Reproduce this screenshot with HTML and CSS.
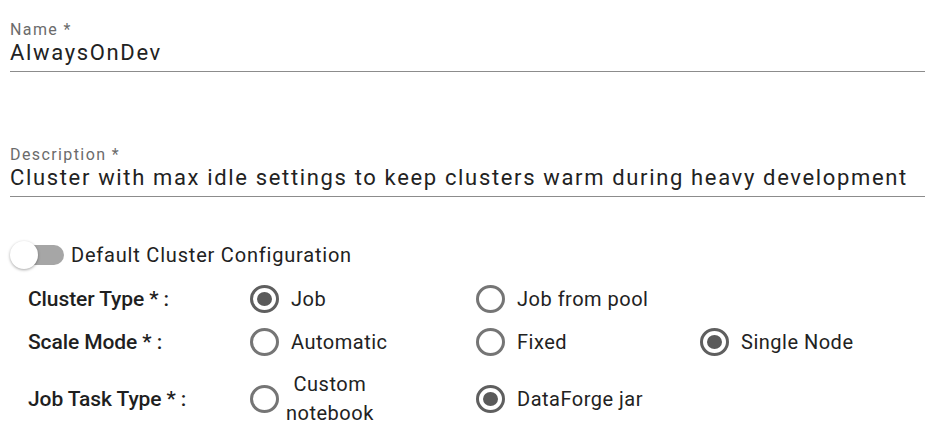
FILE: index.html
```html
<!DOCTYPE html>
<html>
<head>
<meta charset="utf-8">
<link rel="stylesheet" href="styles.css">
</head>
<body>
<div class="form">
  <div class="field field-name">
    <div class="field-label">Name *</div>
    <div class="field-value">AlwaysOnDev</div>
  </div>
  <div class="field field-desc">
    <div class="field-label">Description *</div>
    <div class="field-value">Cluster with max idle settings to keep clusters warm during heavy development</div>
  </div>
  <div class="switch-row">
    <span class="switch"><span class="switch-track"></span><span class="switch-thumb"></span></span>
    <span class="switch-label">Default Cluster Configuration</span>
  </div>
  <div class="options">
    <div class="opt-row">
      <div class="opt-label">Cluster Type * :</div>
      <div class="opt"><span class="radio checked"></span><span class="opt-text">Job</span></div>
      <div class="opt"><span class="radio"></span><span class="opt-text">Job from pool</span></div>
      <div></div>
    </div>
    <div class="opt-row">
      <div class="opt-label">Scale Mode * :</div>
      <div class="opt"><span class="radio"></span><span class="opt-text">Automatic</span></div>
      <div class="opt"><span class="radio"></span><span class="opt-text">Fixed</span></div>
      <div class="opt"><span class="radio checked"></span><span class="opt-text">Single Node</span></div>
    </div>
    <div class="opt-row tall">
      <div class="opt-label">Job Task Type * :</div>
      <div class="opt"><span class="radio"></span><span class="opt-text wrap">Custom<br>notebook</span></div>
      <div class="opt"><span class="radio checked"></span><span class="opt-text">DataForge jar</span></div>
      <div></div>
    </div>
  </div>
</div>
</body>
</html>
```
FILE: styles.css
```css
html, body {
  margin: 0;
  padding: 0;
  background: #ffffff;
}
body {
  font-family: Roboto, "Liberation Sans", sans-serif;
  color: #212121;
  width: 925px;
  height: 440px;
  overflow: hidden;
}
.form {
  padding-left: 10px;
}
.field {
  border-bottom: 1px solid #8c8c8c;
  padding-bottom: 5px;
}
.field-name {
  margin-top: 20px;
}
.field-desc {
  margin-top: 73px;
}
.field-label {
  font-size: 16px;
  line-height: 20px;
  color: #6b6b6b;
  letter-spacing: 1.4px;
}
.field-value {
  font-size: 22px;
  line-height: 26px;
  color: #222222;
  letter-spacing: 1.65px;
  white-space: nowrap;
}
.switch-row {
  display: flex;
  align-items: center;
  height: 30px;
  margin-top: 43px;
}
.switch {
  position: relative;
  width: 54px;
  height: 30px;
  display: inline-block;
}
.switch-track {
  position: absolute;
  left: 2px;
  top: 5px;
  width: 52px;
  height: 20px;
  border-radius: 10px;
  background: #a6a6a6;
}
.switch-thumb {
  position: absolute;
  left: 0;
  top: 1px;
  width: 28px;
  height: 28px;
  border-radius: 50%;
  background: #ffffff;
  box-shadow: 0 1px 3px rgba(0,0,0,0.35);
}
.switch-label {
  margin-left: 7px;
  font-size: 20px;
  letter-spacing: 0.8px;
  color: #212121;
}
.options {
  padding-left: 18px;
  margin-top: 7px;
}
.opt-row {
  display: grid;
  grid-template-columns: 222px 226px 224px auto;
  align-items: center;
  height: 43px;
}
.opt-row.tall {
  height: 58px;
  margin-top: 7px;
}
.opt-label {
  font-size: 21px;
  font-weight: 500;
  letter-spacing: -0.1px;
  color: #1f1f1f;
}
.opt {
  display: flex;
  align-items: center;
}
.radio {
  box-sizing: border-box;
  width: 29px;
  height: 28px;
  border: 3px solid #757575;
  border-radius: 50%;
  position: relative;
  flex: none;
}
.radio.checked {
  border-color: #5f5f5f;
}
.radio.checked::after {
  content: "";
  position: absolute;
  left: 4px;
  top: 4px;
  width: 15px;
  height: 14px;
  border-radius: 50%;
  background: #5a5a5a;
}
.opt-text {
  margin-left: 12px;
  font-size: 20px;
  letter-spacing: 0.5px;
  color: #222222;
}
.opt-text.wrap {
  margin-left: 7px;
  text-align: center;
  line-height: 29px;
}
```
